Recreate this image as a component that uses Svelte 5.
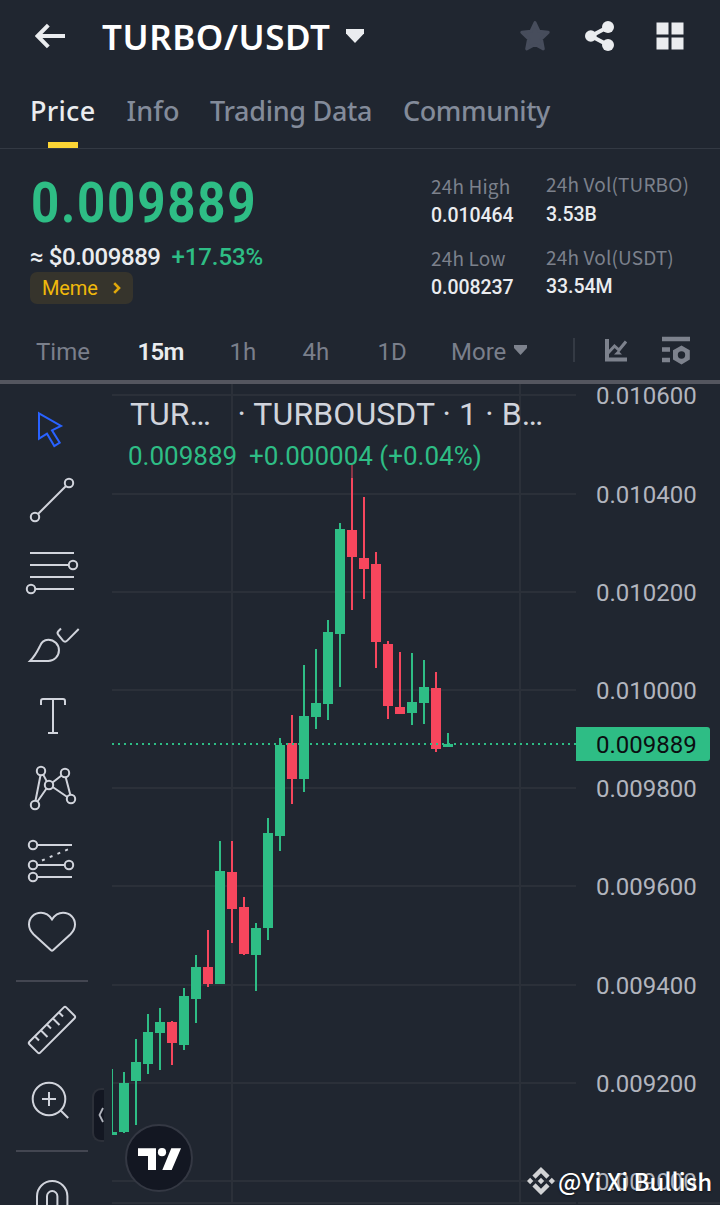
<script lang="ts">
  type Candle = { x: number; high: number; top: number; bottom: number; low: number; down?: boolean };

  const tabs = [
    { label: 'Price', track: 0.3 },
    { label: 'Info', track: 0.1 },
    { label: 'Trading Data', track: -0.3 },
    { label: 'Community', track: -0.4 }
  ];

  const intervals = ['Time', '15m', '1h', '4h', '1D'];
  let activeTab = $state('Price');
  let activeInterval = $state('15m');

  // y positions are in chart pixels, one candle every 12px
  const candles: Candle[] = [
    { x: 112, high: 1069, top: 1132, bottom: 1135, low: 1135 },
    { x: 124, high: 1072, top: 1083, bottom: 1132, low: 1133 },
    { x: 136, high: 1039, top: 1062, bottom: 1081, low: 1125 },
    { x: 148, high: 1014, top: 1032, bottom: 1064, low: 1074 },
    { x: 160, high: 1008, top: 1022, bottom: 1033, low: 1070 },
    { x: 172, high: 1021, top: 1022, bottom: 1043, low: 1065, down: true },
    { x: 184, high: 988, top: 996, bottom: 1045, low: 1050 },
    { x: 196, high: 955, top: 967, bottom: 999, low: 1023 },
    { x: 208, high: 930, top: 967, bottom: 984, low: 987, down: true },
    { x: 220, high: 841, top: 871, bottom: 984, low: 984 },
    { x: 232, high: 841, top: 872, bottom: 909, low: 943, down: true },
    { x: 244, high: 897, top: 907, bottom: 954, low: 955, down: true },
    { x: 256, high: 923, top: 928, bottom: 955, low: 991 },
    { x: 268, high: 818, top: 833, bottom: 928, low: 940 },
    { x: 280, high: 738, top: 745, bottom: 836, low: 851 },
    { x: 292, high: 715, top: 743, bottom: 779, low: 804, down: true },
    { x: 304, high: 665, top: 716, bottom: 779, low: 792 },
    { x: 316, high: 649, top: 703, bottom: 717, low: 729 },
    { x: 328, high: 620, top: 632, bottom: 704, low: 720 },
    { x: 340, high: 523, top: 529, bottom: 634, low: 687 },
    { x: 352, high: 478, top: 530, bottom: 557, low: 610, down: true },
    { x: 364, high: 497, top: 558, bottom: 569, low: 599, down: true },
    { x: 376, high: 552, top: 564, bottom: 642, low: 668, down: true },
    { x: 388, high: 641, top: 644, bottom: 706, low: 719, down: true },
    { x: 400, high: 652, top: 707, bottom: 714, low: 714, down: true },
    { x: 412, high: 653, top: 702, bottom: 713, low: 725 },
    { x: 424, high: 660, top: 687, bottom: 703, low: 724 },
    { x: 436, high: 672, top: 688, bottom: 749, low: 752, down: true },
    { x: 448, high: 733, top: 744, bottom: 747, low: 747 }
  ];

  const levels = [
    { y: 395, price: '0.010600' },
    { y: 494, price: '0.010400' },
    { y: 592, price: '0.010200' },
    { y: 690, price: '0.010000' },
    { y: 788, price: '0.009800' },
    { y: 886, price: '0.009600' },
    { y: 985, price: '0.009400' },
    { y: 1083, price: '0.009200' },
    { y: 1181, price: '0.009000' }
  ];
</script>

<div class="screen">
  <header class="header">
    <svg class="back" width="30" height="26" viewBox="0 0 30 26">
      <path d="M13.3 2.2 2.6 13l10.7 10.8M3 13h27" fill="none" stroke="#eaecef" stroke-width="4" />
    </svg>
    <h1>TURBO/USDT</h1>
    <svg class="caret" width="18" height="14" viewBox="0 0 18 14">
      <path d="M0 0h18v4.5L9 14 0 4.5z" fill="#eaecef" />
    </svg>
    <div class="actions">
      <svg width="32" height="32" viewBox="0 0 32 32">
        <path
          d="M16 2.6l4 8.6 9.2 1.1-6.8 6.5 1.9 10.1L16 24.4l-8.3 4.5 1.9-10.1-6.8-6.5 9.2-1.1z"
          fill="#474d5c" stroke="#474d5c" stroke-width="3" stroke-linejoin="round"
        />
      </svg>
      <svg width="30" height="30" viewBox="0 0 30 30">
        <path d="M23 6 6 15l17 9" fill="none" stroke="#eaecef" stroke-width="4" />
        <circle cx="5.8" cy="15" r="5.8" fill="#eaecef" />
        <circle cx="23" cy="6" r="6" fill="#eaecef" />
        <circle cx="23" cy="24" r="6" fill="#eaecef" />
      </svg>
      <svg width="28" height="28" viewBox="0 0 28 28" fill="#eaecef">
        <rect x="0.5" y="0.5" width="12" height="12" />
        <rect x="15.5" y="0.5" width="12" height="12" />
        <rect x="0.5" y="15.5" width="12" height="12" />
        <rect x="15.5" y="15.5" width="12" height="12" />
      </svg>
    </div>
  </header>

  <nav class="tabs">
    {#each tabs as tab}
      <button class:active={activeTab === tab.label} style="letter-spacing: {tab.track}px" onclick={() => (activeTab = tab.label)}>
        {tab.label}
      </button>
    {/each}
  </nav>

  <section class="summary">
    <div class="quote">
      <div class="price">0.009889</div>
      <div class="fiat"><span>≈ $0.009889</span><span class="change">+17.53%</span></div>
      <div class="tag">
        Meme
        <svg width="8" height="12" viewBox="0 0 8 12">
          <path d="M1.2 1.2 6 6l-4.8 4.8" fill="none" stroke="#e0a80c" stroke-width="2.6" />
        </svg>
      </div>
    </div>
    <dl class="stats">
      <dt>24h High</dt>
      <dd>0.010464</dd>
      <dt>24h Low</dt>
      <dd>0.008237</dd>
    </dl>
    <dl class="stats volume">
      <dt>24h Vol(TURBO)</dt>
      <dd>3.53B</dd>
      <dt>24h Vol(USDT)</dt>
      <dd>33.54M</dd>
    </dl>
  </section>

  <nav class="intervals">
    {#each intervals as item}
      <button class:active={activeInterval === item} onclick={() => (activeInterval = item)}>{item}</button>
    {/each}
    <button class="more">
      <span>More</span>
      <svg width="13" height="10" viewBox="0 0 13 10"><path d="M0 0h13v3L6.5 10 0 3z" fill="#7d828d" /></svg>
    </button>
    <span class="divider"></span>
    <svg class="kline" width="22" height="23" viewBox="0 0 22 23">
      <path d="M2 0v20.5h20" fill="none" stroke="#7d828d" stroke-width="4" />
      <path d="M3 14l6.5-7 4.5 4 7-8.5" fill="none" stroke="#7d828d" stroke-width="3" />
      <path d="M9 15.500l4-4 4 4z" fill="#7d828d" />
    </svg>
    <svg class="settings" width="28" height="29" viewBox="0 0 28 29">
      <path d="M0 3h28M0 13.5h8M0 24h8" stroke="#7d828d" stroke-width="4.5" />
      <path
        fill-rule="evenodd" fill="#7d828d"
        d="M19.500 9.500l8.300 4.800v9.200l-8.300 5-8.500-5v-9.200zM19.500 15.300a3.700 3.700 0 1 0 0 7.400 3.700 3.700 0 0 0 0-7.400z"
      />
    </svg>
  </nav>

  <main class="workspace">
    <aside class="tools">
      <svg class="cursor" viewBox="0 0 72 72">
        <path d="M23 20.300 45 33l-9 4.300 7.700 12.400-5.400 3.300L31 40.700l-8 5z" />
      </svg>
      <svg viewBox="0 0 72 72">
        <circle cx="53" cy="18" r="4.2" /><circle cx="19" cy="52" r="4.2" />
        <path d="M22 49 50 21" />
      </svg>
      <svg viewBox="0 0 72 72">
        <path d="M14 16h44M14 28h38.800M14 40h44M19.200 52H58" />
        <circle cx="57" cy="28" r="4.2" /><circle cx="15" cy="52" r="4.2" />
      </svg>
      <svg viewBox="0 0 72 72">
        <path d="M14 52c5-5 7-9 9.500-14 1.500-4.500 4.500-7.300 8.800-7.300a10.600 10.600 0 0 1 0 21.300z" />
        <path d="M45 19.500l-2.700 2.700q-1.500 1.600-.1 3.400l4.800 6q2 2.200 4.200 0L62.700 20" />
      </svg>
      <svg viewBox="0 0 72 72">
        <path d="M25 24v-4q0-2 2-2h20q2 0 2 2v4M37 18v34M32 52h10" />
      </svg>
      <svg viewBox="0 0 72 72">
        <path d="M24.500 22.200 19.500 47.800M27.200 21.600l3.600 6.800M30.500 35.500 21.500 48.500M36.500 29.500l9-7M36.700 34l14.600 10M49.700 24.200l4.600 17.600" />
        <circle cx="25" cy="18" r="4.2" /><circle cx="49" cy="20" r="4.2" /><circle cx="33" cy="32" r="4.2" />
        <circle cx="19" cy="52" r="4.2" /><circle cx="55" cy="46" r="4.2" />
      </svg>
      <svg viewBox="0 0 72 72">
        <path d="M21.200 20H56M21.200 40h27.600M21.200 52H56" />
        <path d="M26 35.500 53.500 23.700" stroke-dasharray="3 5.4" />
        <circle cx="17" cy="20" r="4.2" /><circle cx="17" cy="40" r="4.2" />
        <circle cx="53" cy="40" r="4.2" /><circle cx="17" cy="52" r="4.2" />
      </svg>
      <svg viewBox="0 0 72 72">
        <path d="M36 22.500C32.500 17 28.500 15.800 25 15.800c-7 0-12 5.200-12 11.700 0 4 1.500 6.700 4.500 9.700L35 53.300q1 .9 2 0l17.500-16.100c3-3 4.500-5.700 4.500-9.700 0-6.500-5-11.700-12-11.700-3.500 0-7.500 1.200-11 6.700z" />
      </svg>
      <hr class="first" />
      <svg viewBox="0 0 72 72">
        <path d="M13.400 47.800 47.800 13.400q1.200-1.200 2.400 0l8.400 8.400q1.200 1.200 0 2.400L24.200 58.600q-1.200 1.200-2.400 0l-8.400-8.400q-1.200-1.200 0-2.400z" />
        <path d="M19 42.500l4 4M25 36.500l6.500 6.500M31 30.500l4 4M37 24.500l6.500 6.500M43 18.500l4 4" />
      </svg>
      <svg viewBox="0 0 72 72">
        <circle cx="33" cy="33" r="16.3" />
        <path d="M33 26v14M26 33h14M44.700 44.500l7.500 7.500" />
      </svg>
      <hr />
      <svg viewBox="0 0 72 72">
        <path d="M21 72V32.300a15.200 15.200 0 0 1 30.400 0V72M31 72V32.300a5.200 5.200 0 0 1 10.400 0V72" />
      </svg>
      <div class="collapse">
        <svg width="6" height="16" viewBox="0 0 6 16">
          <path d="M5 1 1.500 8 5 15" fill="none" stroke="#b2b5be" stroke-width="1.8" />
        </svg>
      </div>
    </aside>

    <div class="chart">
      <svg width="608" height="821" viewBox="112 384 608 821">
        <g fill="#2b3039">
          {#each levels as level}
            <rect x="112" y={level.y - 1} width="464" height="2" />
          {/each}
          <rect x="231" y="384" width="2" height="819" />
          <rect x="519" y="384" width="2" height="819" />
          <rect x="112" y="1202" width="464" height="2" />
          <rect x="578" y="1202" width="142" height="2" />
        </g>

        {#each candles as c}
          <g fill={c.down ? '#f6465d' : '#2ebd85'}>
            <rect x={c.x - 1} y={c.high} width="2" height={c.low - c.high} />
            <rect x={c.x - 5} y={c.top} width="10" height={c.bottom - c.top} />
          </g>
        {/each}
        <rect x="351" y="464" width="2" height="14" fill="#f6465d" opacity="0.5" />

        <path d="M112 744h464" stroke="#2ebd85" stroke-width="2" stroke-dasharray="2 4" />

        <g class="legend">
          <text x="130" y="425">TUR…</text>
          <text x="237.5" y="425" letter-spacing="0.1">· TURBOUSDT · 1 · B…</text>
        </g>
        <g class="values">
          <text x="128" y="465">0.009889</text>
          <text x="249" y="465">+0.000004 (+0.04%)</text>
        </g>

        <g class="axis">
          {#each levels as level}
            <text x="596" y={level.y + 9}>{level.price}</text>
          {/each}
        </g>
        <path d="M576 727h131q3 0 3 3v28q0 3-3 3H576z" fill="#2ebd85" />
        <text class="last" x="596" y="753">0.009889</text>
      </svg>

      <svg class="tv-logo" width="68" height="68" viewBox="0 0 68 68">
        <circle cx="34" cy="34" r="33" fill="#131722" stroke="#343843" stroke-width="2" />
        <path d="M13 24.300h18V46h-8V32H13zM46.300 24.300H56L46.700 46h-9.400z" fill="#fff" />
        <circle cx="37" cy="28.2" r="4.1" fill="#fff" />
      </svg>

      <div class="watermark">
        <svg width="28" height="28" viewBox="0 0 24 24">
          <path
            fill="#d2d3d5"
            d="M16.624 13.920l2.717 2.715-7.353 7.353-7.353-7.352 2.717-2.716 4.636 4.659zM21.260 9.284 24 12l-2.715 2.716L18.568 12zM11.988 9.285l2.717 2.691-2.717 2.717L9.272 12zM2.716 9.284 5.409 12l-2.692 2.692L0 12zM11.988.012l7.353 7.329-2.717 2.715-4.636-4.635-4.635 4.659-2.718-2.715z"
          />
        </svg>
        @Yi Xi Bullish
      </div>
    </div>
  </main>
</div>

<style>
  :global(body) {
    margin: 0;
    background: #202630;
  }

  .screen {
    width: 720px;
    height: 1205px;
    overflow: hidden;
    display: flex;
    flex-direction: column;
    background: #202630;
    color: #eaecef;
    font-family: Roboto, 'Noto Sans', sans-serif;
  }

  svg {
    display: block;
    flex: none;
  }

  button {
    padding: 0;
    border: 0;
    background: none;
    color: inherit;
    font: inherit;
    text-align: left;
    white-space: nowrap;
  }

  .header {
    flex: none;
    display: flex;
    align-items: center;
    height: 72px;
    padding: 0 36px 0 35px;
    box-sizing: border-box;
  }

  h1 {
    margin: 0 0 0 37px;
    padding-top: 2px;
    width: 229px;
    font: 600 35px/72px 'Noto Sans', sans-serif;
    letter-spacing: 0.55px;
    color: #fff;
    white-space: nowrap;
  }

  .caret {
    margin-left: 15px;
  }

  .actions {
    display: flex;
    align-items: center;
    margin-left: auto;
  }

  .actions svg:nth-child(2) {
    margin: 0 41px 0 34px;
  }

  .tabs {
    flex: none;
    display: grid;
    grid-template-columns: 96.5px 83.5px 193px 160px;
    height: 77px;
    padding-left: 30px;
    border-bottom: 1px solid #333943;
    box-sizing: border-box;
    font: 500 27px/80px 'Noto Sans', sans-serif;
    color: #838b9a;
  }

  .tabs button {
    position: relative;
    justify-self: start;
    padding-top: 2px;
    line-height: 74px;
    height: 76px;
  }

  .tabs .active {
    color: #eaecef;
  }

  .tabs .active::after {
    content: '';
    position: absolute;
    left: 18px;
    bottom: 0;
    width: 30px;
    height: 6px;
    background: #fcd535;
  }

  .summary {
    flex: none;
    display: flex;
    height: 171px;
  }

  .quote {
    width: 401px;
    padding: 24px 0 0 30px;
    box-sizing: border-box;
    margin-right: 30px;
  }

  .price {
    margin-left: 0.5px;
    font-size: 56px;
    line-height: 60px;
    font-weight: 700;
    letter-spacing: 2px;
    color: #2ebd85;
    transform: scaleX(0.88);
    transform-origin: left;
  }

  .fiat {
    display: flex;
    gap: 11px;
    margin-top: 9px;
    font-size: 24px;
    font-weight: 500;
    line-height: 30px;
    letter-spacing: -0.45px;
  }

  .change {
    color: #2ebd85;
    letter-spacing: -0.1px;
  }

  .tag {
    display: flex;
    align-items: center;
    gap: 15px;
    width: 103px;
    height: 32px;
    padding-left: 12px;
    box-sizing: border-box;
    border-radius: 7px;
    background: #36342c;
    color: #f0b90b;
    font-size: 20px;
    line-height: 32px;
    letter-spacing: -0.1px;
  }

  .stats {
    margin: 0;
    padding-top: 23px;
    width: 115px;
    white-space: nowrap;
  }

  .stats dt {
    font: 400 19px/28px 'Noto Sans CJK SC', sans-serif;
    letter-spacing: 0.15px;
    color: #7c818c;
  }

  .stats dd {
    margin: 1.5px 0 14.5px;
    font-size: 19.5px;
    font-weight: 500;
    line-height: 28px;
    letter-spacing: -0.05px;
  }

  .stats.volume {
    padding-top: 20.5px;
  }

  .stats.volume dd {
    margin: 3px 0 14px;
  }

  .stats.volume dd:last-child {
    margin-top: 2px;
  }

  .intervals {
    flex: none;
    display: grid;
    grid-template-columns: 101.5px 92px 73px 75px 73px 122.5px 32px 57px 30px;
    align-items: center;
    height: 64px;
    padding-left: 36px;
    box-sizing: border-box;
    border-bottom: 4px solid #54565f;
    font-size: 24px;
    line-height: 60px;
    color: #7a7f8b;
  }

  .intervals button {
    height: 60px;
    line-height: 64px;
  }

  .intervals .active {
    color: #eaecef;
    font-weight: 600;
    letter-spacing: -0.7px;
  }

  .more {
    display: flex;
    align-items: center;
    gap: 8px;
    padding-left: 0.5px;
  }

  .more span {
    padding-top: 4px;
    line-height: 60px;
  }

  .divider {
    width: 2px;
    height: 24px;
    background: #343a44;
  }

  .workspace {
    flex: 1;
    min-height: 0;
    display: flex;
  }

  .tools {
    position: relative;
    width: 112px;
    padding: 9px 24px 0 16px;
    box-sizing: border-box;
  }

  .tools > svg {
    width: 72px;
    height: 72px;
    fill: none;
    stroke: #d1d4dc;
    stroke-width: 2;
  }

  .tools > .cursor {
    stroke: #2962ff;
  }

  .tools hr {
    height: 2px;
    margin: 12px 0;
    border: 0;
    background: #434651;
  }

  .tools hr.first {
    margin: 11px 0 12px;
  }

  .collapse {
    position: absolute;
    left: 92px;
    top: 704px;
    display: flex;
    align-items: center;
    justify-content: flex-end;
    width: 12px;
    height: 54px;
    box-sizing: border-box;
    border: 2px solid #2c3039;
    border-right: 0;
    border-radius: 9px 0 0 9px;
    background: #131722;
  }

  .chart {
    position: relative;
    width: 608px;
  }

  .chart text {
    font-family: Roboto, sans-serif;
  }

  .legend {
    font-size: 32px;
    fill: #d1d4dc;
  }

  .values {
    font-size: 26px;
    fill: #2ebd85;
  }

  .axis {
    font-size: 24px;
    fill: #b2b5be;
  }

  .last {
    font-size: 24px;
    fill: #0b0e11;
  }

  .tv-logo {
    position: absolute;
    left: 13px;
    top: 740px;
  }

  .watermark {
    position: absolute;
    left: 415px;
    top: 783px;
    display: flex;
    align-items: center;
    gap: 3px;
    font: 500 24px/28px 'Noto Sans CJK SC', sans-serif;
    white-space: nowrap;
    color: #fff;
    text-shadow: 0 1px 2px rgba(0, 0, 0, 0.5);
  }
</style>
